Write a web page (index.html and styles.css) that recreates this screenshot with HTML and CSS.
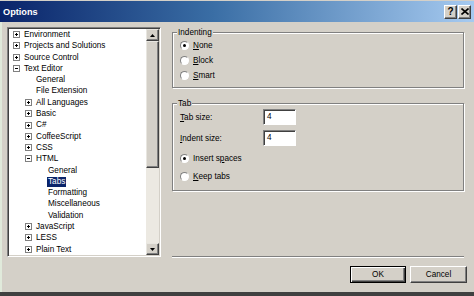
FILE: index.html
```html
<!DOCTYPE html>
<html lang="en">
<head>
  <meta charset="UTF-8">
  <title>Options</title>
  <link rel="stylesheet" href="styles.css">
</head>
<body>
  <div class="window">
    <div class="titlebar">
      <span class="title">Options</span>
      <span class="caption-btns">
        <span class="cap-btn help">?</span>
        <span class="cap-btn close">
          <svg width="8" height="7" viewBox="0 0 8 7"><path d="M0.5 0.5 L7.5 6.5 M7.5 0.5 L0.5 6.5" stroke="#000" stroke-width="1.6"/></svg>
        </span>
      </span>
    </div>

    <div class="client">
      <div class="tree">
        <ul class="tree-items">
          <li class="l1"><span class="exp plus"></span>Environment</li>
          <li class="l1"><span class="exp plus"></span>Projects and Solutions</li>
          <li class="l1"><span class="exp plus"></span>Source Control</li>
          <li class="l1"><span class="exp minus"></span>Text Editor</li>
          <li class="l2"><span class="leaf"></span>General</li>
          <li class="l2"><span class="leaf"></span>File Extension</li>
          <li class="l2"><span class="exp plus"></span>All Languages</li>
          <li class="l2"><span class="exp plus"></span>Basic</li>
          <li class="l2"><span class="exp plus"></span>C#</li>
          <li class="l2"><span class="exp plus"></span>CoffeeScript</li>
          <li class="l2"><span class="exp plus"></span>CSS</li>
          <li class="l2"><span class="exp minus"></span>HTML</li>
          <li class="l3"><span class="leaf"></span>General</li>
          <li class="l3"><span class="leaf"></span><span class="sel">Tabs</span></li>
          <li class="l3"><span class="leaf"></span>Formatting</li>
          <li class="l3"><span class="leaf"></span>Miscellaneous</li>
          <li class="l3"><span class="leaf"></span>Validation</li>
          <li class="l2"><span class="exp plus"></span>JavaScript</li>
          <li class="l2"><span class="exp plus"></span>LESS</li>
          <li class="l2"><span class="exp plus"></span>Plain Text</li>
        </ul>
        <div class="scrollbar">
          <div class="sb-btn">
            <svg width="5" height="3" viewBox="0 0 5 3"><polygon points="2.5,0 5,3 0,3" fill="#000"/></svg>
          </div>
          <div class="sb-thumb"></div>
          <div class="sb-track"></div>
          <div class="sb-btn">
            <svg width="5" height="3" viewBox="0 0 5 3"><polygon points="0,0 5,0 2.5,3" fill="#000"/></svg>
          </div>
        </div>
      </div>

      <div class="pane">
        <fieldset class="group indenting">
          <legend>Indenting</legend>
          <div class="radio"><span class="dot checked"></span><span><u>N</u>one</span></div>
          <div class="radio"><span class="dot"></span><span><u>B</u>lock</span></div>
          <div class="radio"><span class="dot"></span><span><u>S</u>mart</span></div>
        </fieldset>

        <fieldset class="group tab">
          <legend>Tab</legend>
          <div class="field"><span class="label"><u>T</u>ab size:</span><span class="num">4</span></div>
          <div class="field"><span class="label"><u>I</u>ndent size:</span><span class="num">4</span></div>
          <div class="radio"><span class="dot checked"></span><span>Insert s<u>p</u>aces</span></div>
          <div class="radio"><span class="dot"></span><span><u>K</u>eep tabs</span></div>
        </fieldset>

        <div class="separator"></div>
        <div class="buttons">
          <button class="btn default">OK</button>
          <button class="btn cancel">Cancel</button>
        </div>
      </div>
    </div>

    <div class="bottom-edge"></div>
  </div>
</body>
</html>
```

FILE: styles.css
```css
* {
  box-sizing: border-box;
}

body {
  margin: 0;
  font-family: "Liberation Sans", Arial, sans-serif;
  font-size: 8.2px;
  color: #000;
  background: #d4d0c8;
}

.window {
  width: 474px;
  height: 296px;
  display: flex;
  flex-direction: column;
  background: #d4d0c8;
  overflow: hidden;
}

/* title bar */
.titlebar {
  height: 22px;
  flex: none;
  border-top: 1px solid #d4d0c8;
  background: linear-gradient(to right, #0a246a, #3a6ea5 45%, #a6caf0);
  display: flex;
  align-items: center;
  justify-content: space-between;
  padding: 0 3px 0 3px;
}

.title {
  color: #fff;
  font-weight: bold;
  font-size: 9.2px;
}

.caption-btns {
  display: flex;
  gap: 1px;
}

.cap-btn {
  width: 13px;
  height: 14px;
  background: #d4d0c8;
  border: 1px solid;
  border-color: #fff #404040 #404040 #fff;
  box-shadow: inset -1px -1px 0 #808080;
  display: flex;
  align-items: center;
  justify-content: center;
  font-weight: bold;
  font-size: 10px;
  line-height: 10px;
}

/* client area */
.client {
  flex: 1;
  display: flex;
  align-items: flex-start;
  padding: 5px 6px 0 5px;
  border-left: 2px solid #e0eadb;
}

.tree {
  width: 154px;
  height: 230px;
  flex: none;
  display: flex;
  background: #fff;
  border: 1px solid;
  border-color: #808080 #fff #fff #808080;
  padding: 1px;
  box-shadow: inset 1px 1px 0 #404040, inset -1px -1px 0 #d4d0c8;
}

.tree-items {
  list-style: none;
  margin: 0;
  padding: 0;
  flex: 1;
  background: #fff;
}

.tree-items li {
  height: 11.3px;
  line-height: 11.3px;
  display: flex;
  align-items: center;
  white-space: nowrap;
}

.l1 { padding-left: 4px; }
.l2 { padding-left: 16px; }
.l3 { padding-left: 28px; }

.exp, .leaf {
  width: 7px;
  height: 7px;
  margin-right: 4px;
  flex: none;
}

.exp {
  position: relative;
  border: 1px solid #808080;
  background: #fff;
}

.exp::before {
  content: "";
  position: absolute;
  left: 1px;
  top: 2px;
  width: 3px;
  height: 1px;
  background: #000;
}

.exp.plus::after {
  content: "";
  position: absolute;
  left: 2px;
  top: 1px;
  width: 1px;
  height: 3px;
  background: #000;
}

.sel {
  background: #0a246a;
  color: #fff;
  padding: 0 1px;
  margin-left: -1px;
  line-height: 10px;
}

.scrollbar {
  width: 13px;
  flex: none;
  display: flex;
  flex-direction: column;
  background: #ece9e2;
}

.sb-btn {
  height: 12px;
  flex: none;
  background: #d4d0c8;
  border: 1px solid;
  border-color: #e8e6e0 #404040 #404040 #e8e6e0;
  box-shadow: inset -1px -1px 0 #808080;
  display: flex;
  align-items: center;
  justify-content: center;
}

.sb-thumb {
  height: 127px;
  flex: none;
  background: #d4d0c8;
  border: 1px solid;
  border-color: #e8e6e0 #404040 #404040 #e8e6e0;
  box-shadow: inset -1px -1px 0 #808080;
}

.sb-track {
  flex: 1;
}

/* right side */
.pane {
  width: 296px;
  height: 265px;
  margin-left: 11px;
  display: flex;
  flex-direction: column;
}

.group {
  width: 292px;
  min-width: 0;
  margin: 0;
  padding: 0 0 4px 4px;
  border: 1px solid #808080;
  box-shadow: 1px 1px 0 #fff, inset 1px 1px 0 #fff;
}

.group legend {
  padding: 0 1px;
  line-height: 11px;
  background: #d4d0c8;
}

.group.tab {
  margin-top: 10px;
  padding-bottom: 6px;
}

.radio {
  display: flex;
  align-items: center;
  height: 15px;
  padding-left: 3px;
}

.tab .radio + .radio {
  margin-top: 3px;
}

.dot {
  width: 9px;
  height: 9px;
  border-radius: 50%;
  border: 1px solid;
  border-color: #808080 #fff #fff #808080;
  background: #fff;
  margin-right: 4px;
  display: flex;
  align-items: center;
  justify-content: center;
}

.dot.checked::after {
  content: "";
  width: 3px;
  height: 3px;
  border-radius: 50%;
  background: #000;
}

.field {
  display: flex;
  align-items: center;
  height: 16px;
  padding-left: 3px;
  margin-bottom: 5px;
}

.label {
  width: 83px;
}

.num {
  width: 33px;
  height: 16px;
  background: #fff;
  border: 1px solid;
  border-color: #808080 #fff #fff #808080;
  box-shadow: inset 1px 1px 0 #404040;
  padding-left: 3px;
  line-height: 14px;
}

.separator {
  margin-top: auto;
  width: 292px;
  height: 2px;
  border-top: 1px solid #808080;
  border-bottom: 1px solid #fff;
}

.buttons {
  display: flex;
  justify-content: flex-end;
  gap: 4px;
  margin: 8px 1px 9px 0;
}

.btn {
  width: 57px;
  height: 17px;
  padding: 0;
  font: inherit;
  color: #000;
  background: #d4d0c8;
  border: 1px solid;
  border-color: #fff #404040 #404040 #fff;
  box-shadow: inset -1px -1px 0 #808080;
}

.btn.default {
  width: 56px;
  border-color: #000;
  box-shadow: inset 1px 1px 0 #fff, inset -1px -1px 0 #404040, inset -2px -2px 0 #808080;
}

.bottom-edge {
  height: 4px;
  flex: none;
  background: #404040;
}
```
